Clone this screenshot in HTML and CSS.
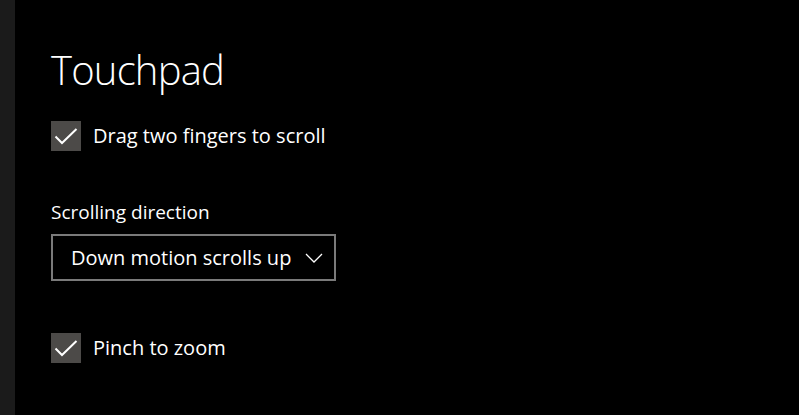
FILE: index.html
```html
<!DOCTYPE html>
<html>
<head>
<meta charset="utf-8">
<link rel="stylesheet" href="styles.css">
</head>
<body>
<div class="app">
  <div class="rail"></div>
  <main class="content">
    <h1 class="title">Touchpad</h1>
    <label class="check">
      <span class="box"><svg viewBox="0 0 30 30" width="30" height="30"><path d="M4.5 15.5 L11 22 L25.5 8" fill="none" stroke="#fff" stroke-width="2"/></svg></span>
      <span class="check-text">Drag two fingers to scroll</span>
    </label>
    <div class="field-label">Scrolling direction</div>
    <div class="select">
      <span class="select-text">Down motion scrolls up</span>
      <svg class="chev" viewBox="0 0 18 10" width="18" height="10"><path d="M1 1 L9 9 L17 1" fill="none" stroke="#fff" stroke-width="1.3"/></svg>
    </div>
    <label class="check check-last">
      <span class="box"><svg viewBox="0 0 30 30" width="30" height="30"><path d="M4.5 15.5 L11 22 L25.5 8" fill="none" stroke="#fff" stroke-width="2"/></svg></span>
      <span class="check-text">Pinch to zoom</span>
    </label>
  </main>
</div>
</body>
</html>
```
FILE: styles.css
```css
html, body {
  margin: 0;
  padding: 0;
  background: #000;
  height: 100%;
}
body {
  font-family: "Open Sans", "Noto Sans", sans-serif;
  color: #fff;
  overflow: hidden;
}
.app {
  display: flex;
  height: 415px;
}
.rail {
  width: 15px;
  background: #1b1b1b;
  flex: none;
}
.content {
  padding-left: 36px;
  display: flex;
  flex-direction: column;
  align-items: flex-start;
}
.title {
  font-weight: 300;
  font-size: 40px;
  line-height: 56px;
  margin: 42px 0 0 0;
  letter-spacing: -0.8px;
}
.check {
  display: flex;
  align-items: center;
  gap: 12px;
}
.check:first-of-type {
  margin-top: 23px;
}
.box {
  width: 30px;
  height: 30px;
  background: #4c4a48;
  display: block;
}
.box svg { display: block; }
.check-text {
  font-size: 20px;
  line-height: 30px;
}
.field-label {
  font-size: 19px;
  line-height: 28px;
  margin-top: 47px;
}
.select {
  margin-top: 8px;
  box-sizing: border-box;
  width: 285px;
  height: 47px;
  border: 2px solid #7a7a7a;
  display: flex;
  align-items: center;
  justify-content: space-between;
  padding: 0 11px 0 18px;
}
.select-text {
  font-size: 20px;
}
.chev { display: block; }
.check-last {
  margin-top: 52px;
}
```
